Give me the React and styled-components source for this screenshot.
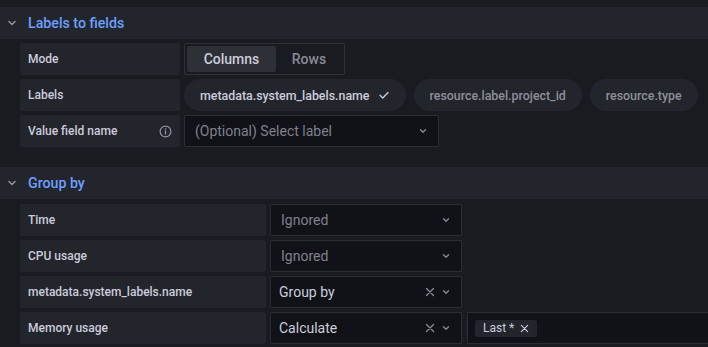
import React from "react";
import styled, { createGlobalStyle } from "styled-components";

const GlobalStyle = createGlobalStyle`
  html, body { margin: 0; padding: 0; background: #181b1f; }
  body { font-family: Roboto, Inter, "Noto Sans", sans-serif; color: #ccccdc; }
`;

const Page = styled.div`
  width: 708px;
  height: 347px;
  overflow: hidden;
  padding-top: 7px;
  box-sizing: border-box;
`;

const Section = styled.div`
  margin-bottom: ${(p) => p.$mb || 0}px;
`;

const Header = styled.div`
  height: 32px;
  background: #22252b;
  display: flex;
  align-items: center;
  padding-left: 6px;
  gap: 10px;
  font-size: 14.2px;
  font-weight: 500;
  color: #6e9fff;
`;

const Body = styled.div`
  padding: ${(p) => p.$pt || 4}px 0 0 20px;
  display: flex;
  flex-direction: column;
  gap: 4px;
`;

const Row = styled.div`
  display: flex;
  gap: 4px;
  height: 32px;
`;

const Label = styled.div`
  width: ${(p) => p.$w}px;
  flex-shrink: 0;
  box-sizing: border-box;
  background: #22252b;
  border-radius: 2px;
  padding: 0 8px;
  display: flex;
  align-items: center;
  justify-content: space-between;
  font-size: 12px;
  font-weight: 500;
  color: #ccccdc;
`;

const RadioGroup = styled.div`
  display: flex;
  box-sizing: border-box;
  border: 1px solid rgba(204, 204, 220, 0.12);
  border-radius: 2px;
  padding: 2px;
  width: 161px;
`;

const RadioBtn = styled.div`
  flex: ${(p) => (p.$active ? "0 0 89px" : "1")};
  display: flex;
  align-items: center;
  justify-content: center;
  font-size: 14px;
  font-weight: 500;
  border-radius: 2px;
  background: ${(p) => (p.$active ? "#2d3036" : "transparent")};
  color: ${(p) => (p.$active ? "#ccccdc" : "rgba(204,204,220,0.65)")};
`;

const Chips = styled.div`
  display: flex;
  gap: 8px;
`;

const Chip = styled.div`
  height: 32px;
  border-radius: 16px;
  background: #22252b;
  padding: 0 16px;
  display: flex;
  align-items: center;
  gap: 8px;
  font-size: 12.4px;
  font-weight: 500;
  color: ${(p) => (p.$on ? "#ccccdc" : "rgba(204,204,220,0.65)")};
`;

const Select = styled.div`
  width: ${(p) => p.$w}px;
  flex-shrink: 0;
  box-sizing: border-box;
  background: #111217;
  border: 1px solid rgba(204, 204, 220, 0.15);
  border-radius: 2px;
  display: flex;
  align-items: center;
  padding: 0 10px 0 ${(p) => p.$pl || 8}px;
  font-size: 14px;
  color: ${(p) => (p.$muted ? "rgba(204,204,220,0.6)" : "#ccccdc")};
`;

const SelectText = styled.span`
  flex: 1;
`;

const Icons = styled.div`
  display: flex;
  align-items: center;
  gap: 6px;
  color: rgba(204, 204, 220, 0.65);
`;

const MultiField = styled.div`
  flex: 1;
  min-width: 0;
  margin-left: 1px;
  margin-right: -10px;
  box-sizing: border-box;
  background: #111217;
  border: 1px solid rgba(204, 204, 220, 0.15);
  border-radius: 2px;
  display: flex;
  align-items: center;
  padding-left: 7px;
`;

const Tag = styled.div`
  height: 17px;
  background: #22252b;
  border-radius: 2px;
  display: flex;
  align-items: center;
  gap: 6px;
  padding: 0 8px;
  font-size: 12px;
  color: #ccccdc;
`;

const SectionIcon = styled.span`
  display: flex;
  color: rgba(204, 204, 220, 0.65);
`;

const Chevron = ({ size = 10 }) => (
  <svg width={size} height={size} viewBox="0 0 10 10" fill="none">
    <path d="M2.5 3.8 L5 6.3 L7.5 3.8" stroke="currentColor" strokeWidth="1.3" strokeLinecap="round" strokeLinejoin="round" />
  </svg>
);

const Cross = ({ size = 10 }) => (
  <svg width={size} height={size} viewBox="0 0 10 10" fill="none">
    <path d="M1.5 1.5 L8.5 8.5 M8.5 1.5 L1.5 8.5" stroke="currentColor" strokeWidth="1.3" strokeLinecap="round" />
  </svg>
);

const Check = () => (
  <svg width="12" height="12" viewBox="0 0 12 12" fill="none">
    <path d="M2 6.3 L4.8 9 L10 3.5" stroke="currentColor" strokeWidth="1.3" strokeLinecap="round" strokeLinejoin="round" />
  </svg>
);

const Info = () => (
  <svg width="13" height="13" viewBox="0 0 14 14" fill="none" style={{ color: "rgba(204,204,220,0.65)" }}>
    <circle cx="7" cy="7" r="5.8" stroke="currentColor" strokeWidth="1.3" />
    <path d="M7 6.3 V9.8" stroke="currentColor" strokeWidth="1.4" strokeLinecap="round" />
    <circle cx="7" cy="4.3" r="0.85" fill="currentColor" />
  </svg>
);

const groupRows = [
  { label: "Time", value: "Ignored", muted: true },
  { label: "CPU usage", value: "Ignored", muted: true },
  { label: "metadata.system_labels.name", value: "Group by" },
  { label: "Memory usage", value: "Calculate", calc: true },
];

export default function App() {
  return (
    <Page>
      <GlobalStyle />
      <Section $mb={20}>
        <Header>
          <SectionIcon>
            <Chevron size={12} />
          </SectionIcon>
          Labels to fields
        </Header>
        <Body>
          <Row>
            <Label $w={160}>Mode</Label>
            <RadioGroup>
              <RadioBtn $active>Columns</RadioBtn>
              <RadioBtn>Rows</RadioBtn>
            </RadioGroup>
          </Row>
          <Row>
            <Label $w={160}>Labels</Label>
            <Chips>
              <Chip $on>
                metadata.system_labels.name <Check />
              </Chip>
              <Chip>resource.label.project_id</Chip>
              <Chip>resource.type</Chip>
            </Chips>
          </Row>
          <Row>
            <Label $w={160}>
              Value field name <Info />
            </Label>
            <Select $w={255} $pl={10} $muted>
              <SelectText>(Optional) Select label</SelectText>
              <Icons>
                <Chevron />
              </Icons>
            </Select>
          </Row>
        </Body>
      </Section>
      <Section>
        <Header>
          <SectionIcon>
            <Chevron size={12} />
          </SectionIcon>
          Group by
        </Header>
        <Body $pt={5}>
          {groupRows.map((r) => (
            <Row key={r.label}>
              <Label $w={246}>{r.label}</Label>
              <Select $w={192} $pl={r.muted ? 10 : 8} $muted={r.muted}>
                <SelectText>{r.value}</SelectText>
                <Icons>
                  {!r.muted && <Cross />}
                  <Chevron />
                </Icons>
              </Select>
              {r.calc && (
                <MultiField>
                  <Tag>
                    Last *
                    <Cross size={9} />
                  </Tag>
                </MultiField>
              )}
            </Row>
          ))}
        </Body>
      </Section>
    </Page>
  );
}
